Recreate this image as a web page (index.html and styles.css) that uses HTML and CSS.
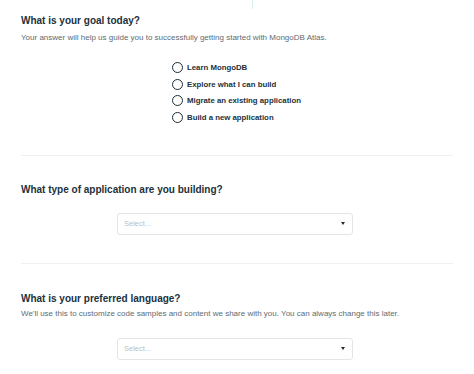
FILE: index.html
```html
<!DOCTYPE html>
<html>
<head>
<meta charset="utf-8">
<link rel="stylesheet" href="styles.css">
</head>
<body>
<div class="page">
  <div class="top-mark"></div>
  <section class="block block-goal">
    <h2 class="title">What is your goal today?</h2>
    <p class="desc">Your answer will help us guide you to successfully getting started with MongoDB Atlas.</p>
    <div class="radios">
      <label class="radio"><span class="dot"></span><span class="radio-label">Learn MongoDB</span></label>
      <label class="radio"><span class="dot"></span><span class="radio-label">Explore what I can build</span></label>
      <label class="radio"><span class="dot"></span><span class="radio-label">Migrate an existing application</span></label>
      <label class="radio"><span class="dot"></span><span class="radio-label">Build a new application</span></label>
    </div>
  </section>
  <hr class="divider">
  <section class="block block-type">
    <h2 class="title">What type of application are you building?</h2>
    <div class="select-row">
      <div class="select"><span class="placeholder">Select...</span><span class="caret"></span></div>
    </div>
  </section>
  <hr class="divider">
  <section class="block block-lang">
    <h2 class="title">What is your preferred language?</h2>
    <p class="desc">We'll use this to customize code samples and content we share with you. You can always change this later.</p>
    <div class="select-row">
      <div class="select"><span class="placeholder">Select...</span><span class="caret"></span></div>
    </div>
  </section>
</div>
</body>
</html>
```
FILE: styles.css
```css
html, body {
  margin: 0;
  padding: 0;
  background: #ffffff;
}
body {
  font-family: "Liberation Sans", Arial, sans-serif;
  color: #21313c;
}
.page {
  position: relative;
  padding: 0 21px 0 21px;
  width: 474px;
  box-sizing: border-box;
}
.top-mark {
  position: absolute;
  left: 252px;
  top: 0;
  width: 1px;
  height: 9px;
  background: #d6f0e4;
}
.block {
  display: flex;
  flex-direction: column;
}
.title {
  margin: 0;
  font-size: 10px;
  font-weight: 700;
  line-height: 12px;
  color: #21313c;
}
.desc {
  margin: 0;
  font-size: 8px;
  line-height: 10px;
  color: #5d6c74;
}
.block-goal {
  padding-top: 15px;
}
.block-goal .desc {
  margin-top: 6px;
}
.radios {
  display: flex;
  flex-direction: column;
  gap: 5.5px;
  margin-top: 19px;
  margin-left: 151px;
}
.radio {
  display: flex;
  align-items: center;
  gap: 4px;
  height: 11px;
}
.dot {
  width: 11px;
  height: 11px;
  box-sizing: border-box;
  border: 1.6px solid #1c2b35;
  border-radius: 50%;
  flex: none;
}
.radio-label {
  font-size: 7.8px;
  font-weight: 700;
  color: #21313c;
}
.divider {
  margin: 0;
  border: 0;
  height: 1px;
  background: #eef0f0;
}
.block-goal + .divider {
  margin-top: 32px;
}
.block-type {
  padding-top: 28px;
}
.select-row {
  display: flex;
  justify-content: center;
  margin-left: -4px;
}
.block-type .select-row {
  margin-top: 17px;
}
.select {
  width: 236px;
  height: 22px;
  box-sizing: border-box;
  border: 1px solid #e3e6e7;
  border-radius: 3px;
  display: flex;
  align-items: center;
  justify-content: space-between;
  padding: 0 7px 0 6px;
}
.placeholder {
  font-size: 7.5px;
  color: #b9bfc2;
}
.caret {
  width: 0;
  height: 0;
  border-left: 2.5px solid transparent;
  border-right: 2.5px solid transparent;
  border-top: 3.5px solid #1c2b35;
}
.block-type + .divider {
  margin-top: 28px;
}
.block-lang {
  padding-top: 29px;
}
.block-lang .desc {
  margin-top: 4px;
}
.block-lang .select-row {
  margin-top: 19px;
}
```
